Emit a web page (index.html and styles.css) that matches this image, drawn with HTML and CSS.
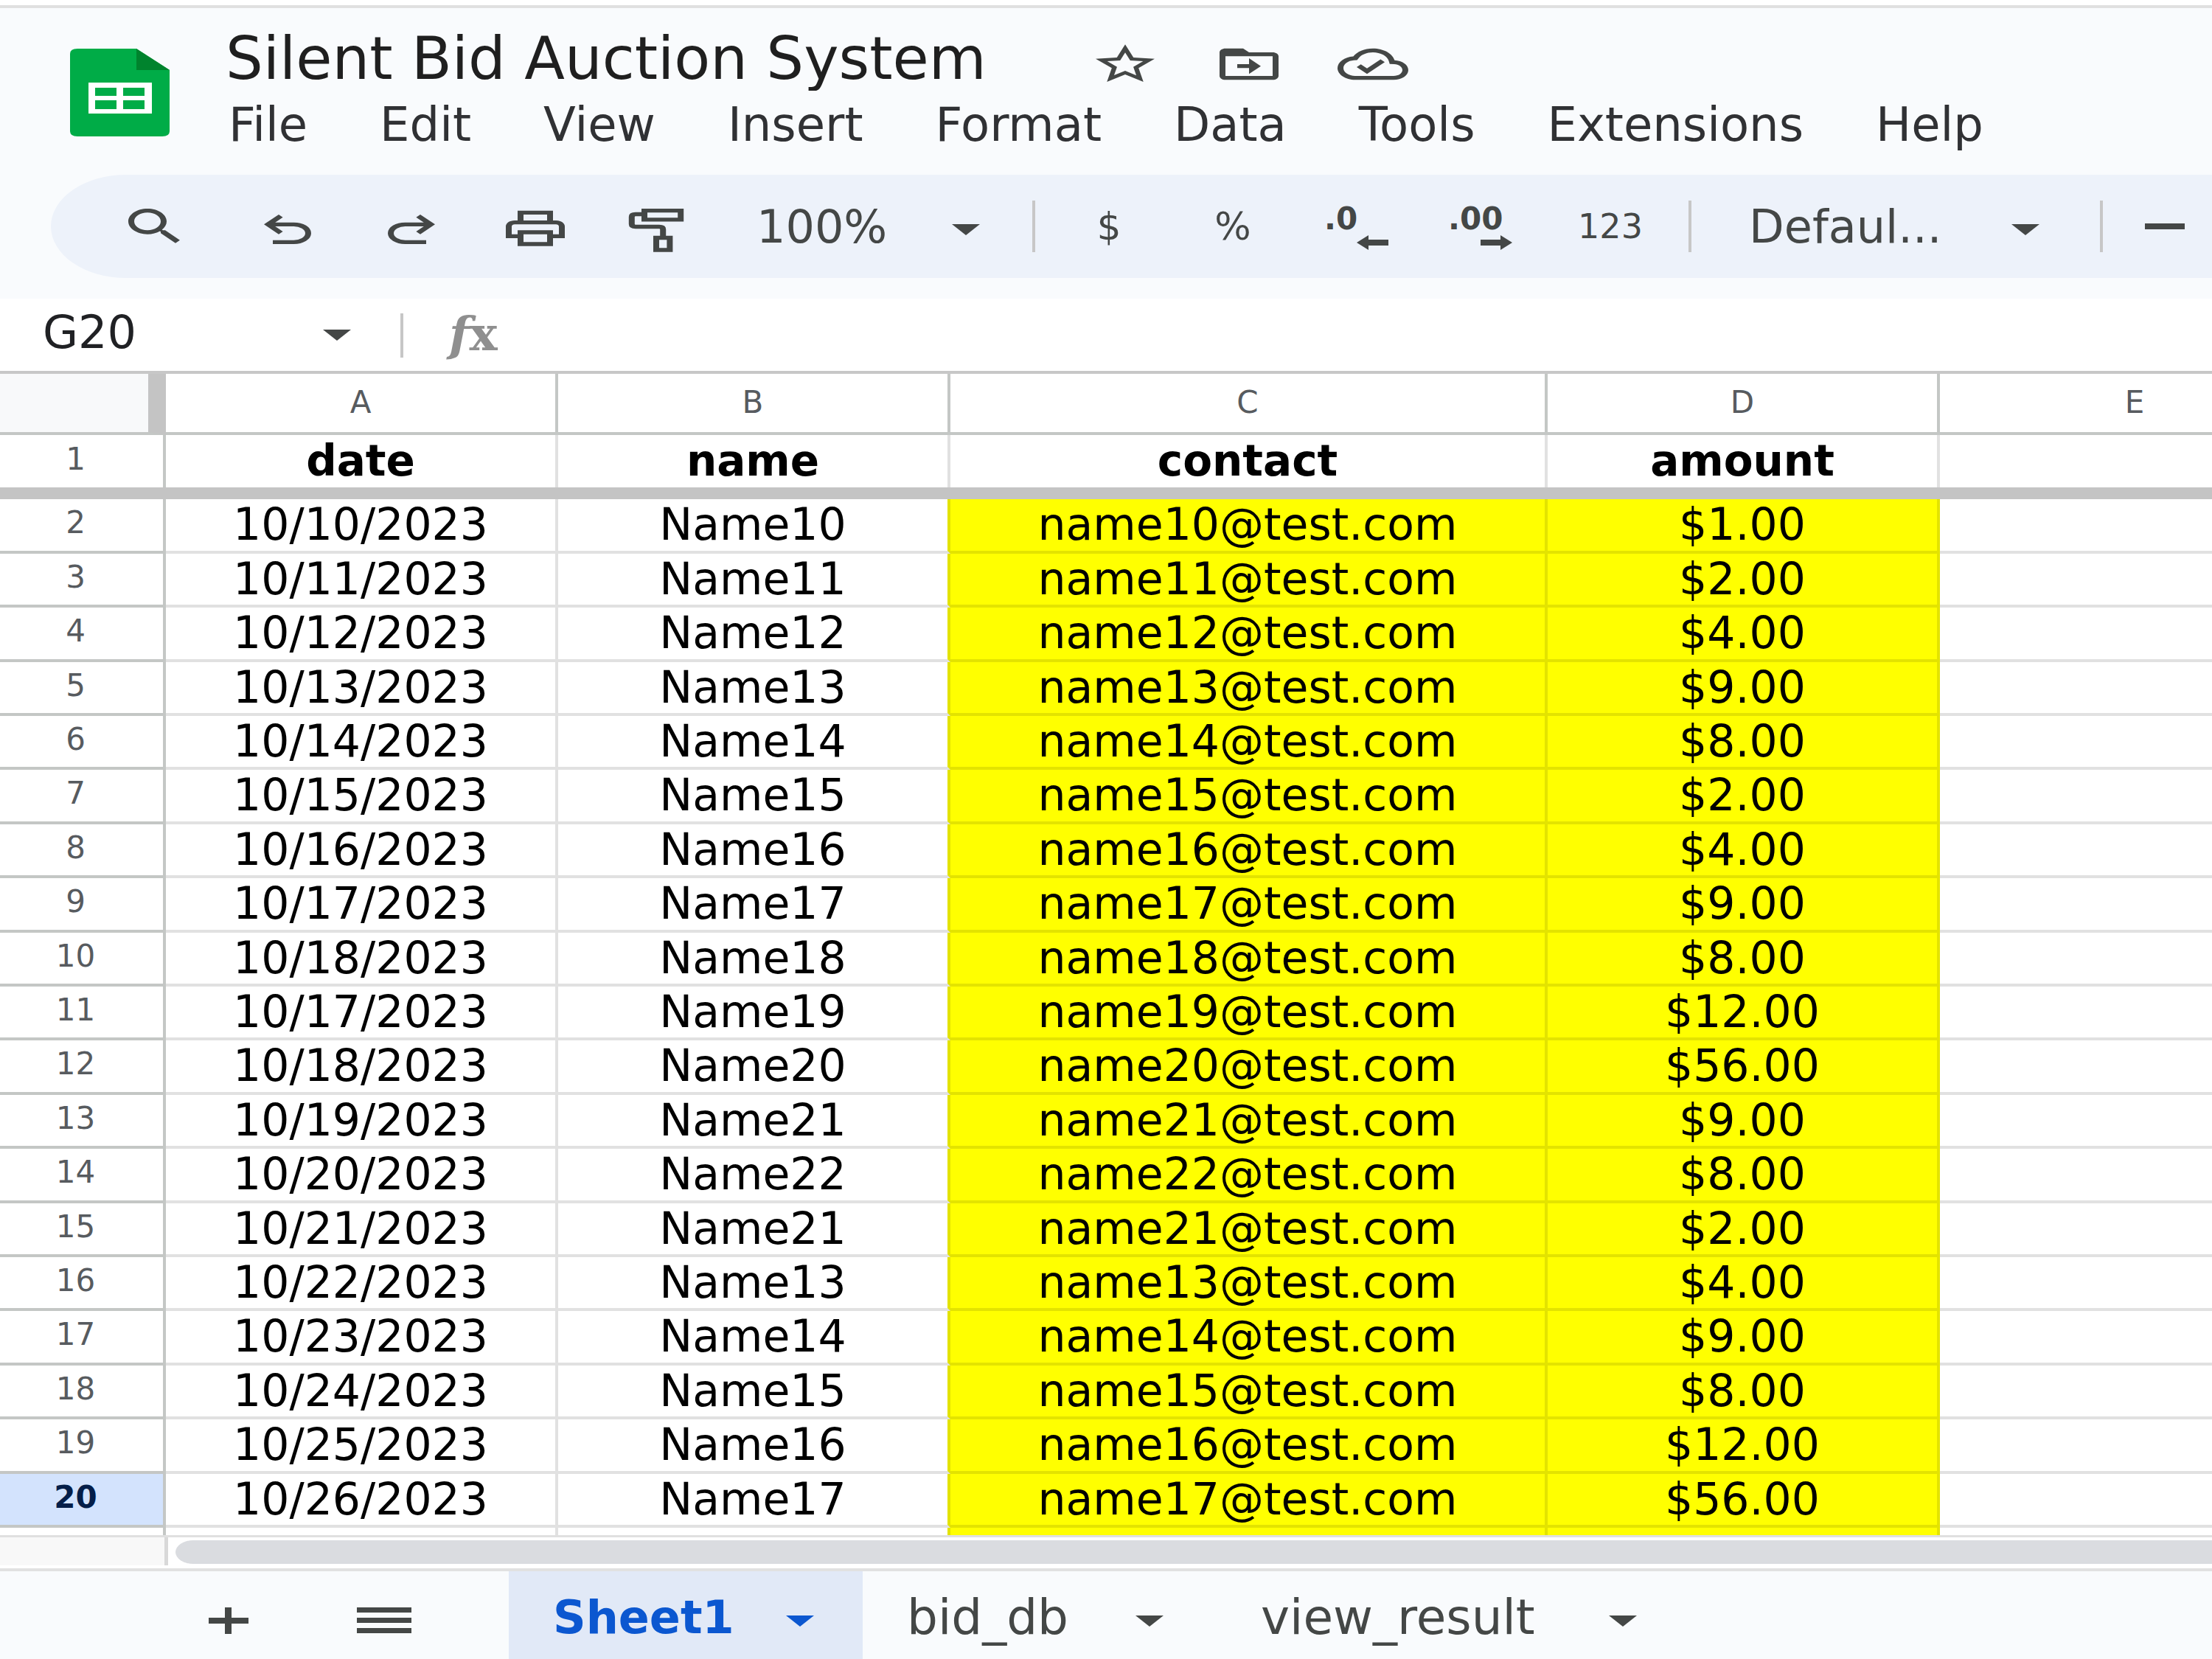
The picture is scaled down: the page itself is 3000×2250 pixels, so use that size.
FILE: index.html
```html
<!DOCTYPE html>
<html lang="en">
<head>
    <meta charset="UTF-8">
    <meta name="viewport" content="width=device-width, initial-scale=1.0">
    <title>Silent Bid Auction System</title>
    <link rel="stylesheet" href="styles.css">
</head>
<body>
    <header>
        <div class="top">
            <svg class="logo" viewBox="0 0 135 119" preserveAspectRatio="none">
                <path fill="#00ac47" d="M10 0h80l45 29v83q0 7-10 7H10q-10 0-10-7V7q0-7 10-7z"/>
                <path fill="#00832d" d="M90 0l45 29H90z"/>
                <path fill="#fff" fill-rule="evenodd" d="M25 46h86v42H25zM34 53v11h29V53zM72 53v11h29V53zM34 70v12h29V70zM72 70v12h29V70z"/>
            </svg>
            <div class="heading">
                <div class="title-row">
                    <input class="doc-title" type="text" value="Silent Bid Auction System" aria-label="Document title">
                    <button aria-label="Star">
                        <svg class="icon" viewBox="0 0 24 24" preserveAspectRatio="none"><path d="M22 9.24l-7.19-.62L12 2 9.19 8.63 2 9.24l5.46 4.73L5.82 21 12 17.27 18.18 21l-1.63-7.03L22 9.24zM12 15.4l-3.76 2.27 1-4.28-3.32-2.88 4.38-.38L12 6.1l1.71 4.04 4.38.38-3.32 2.88 1 4.28L12 15.4z"/></svg>
                    </button>
                    <button aria-label="Move">
                        <svg class="icon" viewBox="0 0 24 24" preserveAspectRatio="none"><path d="M20 6h-8l-2-2H4c-1.1 0-2 .9-2 2v12c0 1.1.9 2 2 2h16c1.1 0 2-.9 2-2V8c0-1.1-.9-2-2-2zm0 12H4V8h16v10zM12 17l4-4-4-4v3H8v2h4z"/></svg>
                    </button>
                    <button aria-label="Saved to Drive">
                        <svg class="icon" viewBox="0 0 24 24" preserveAspectRatio="none"><path d="M19.35 10.04C18.67 6.59 15.64 4 12 4 9.11 4 6.6 5.64 5.35 8.04 2.34 8.36 0 10.91 0 14c0 3.31 2.69 6 6 6h13c2.76 0 5-2.24 5-5 0-2.64-2.05-4.78-4.65-4.96zM19 18H6c-2.21 0-4-1.79-4-4 0-2.05 1.53-3.76 3.56-3.97l1.07-.11.5-.95C8.08 7.14 9.94 6 12 6c2.62 0 4.88 1.86 5.39 4.43l.3 1.5 1.53.11c1.56.1 2.78 1.41 2.78 2.96 0 1.65-1.35 3-3 3zm-9-3.82l-2.09-2.09L6.5 13.5 10 17l6.01-6.01-1.41-1.41z"/></svg>
                    </button>
                </div>
                <nav class="menu">
                    <button>File</button>
                    <button>Edit</button>
                    <button>View</button>
                    <button>Insert</button>
                    <button>Format</button>
                    <button>Data</button>
                    <button>Tools</button>
                    <button>Extensions</button>
                    <button>Help</button>
                </nav>
            </div>
        </div>

        <div class="toolbar">
            <button class="tool search" aria-label="Search the menus">
                <svg class="icon" viewBox="0 0 24 24" preserveAspectRatio="none"><path d="M15.5 14h-.79l-.28-.27C15.41 12.59 16 11.11 16 9.5 16 5.91 13.09 3 9.5 3S3 5.91 3 9.5 5.91 16 9.5 16c1.61 0 3.09-.59 4.23-1.57l.27.28v.79l5 4.99L20.49 19l-4.99-5zm-6 0C7.01 14 5 11.99 5 9.5S7.01 5 9.5 5 14 7.01 14 9.5 11.99 14 9.5 14z"/></svg>
            </button>
            <button class="tool" aria-label="Undo">
                <svg class="icon" viewBox="0 -2 24 24" preserveAspectRatio="none"><path d="M7 19v-2h7.1q1.575 0 2.737-1T18 13.5 16.837 11 14.1 10H7.8l2.6 2.6L9 14 4 9l5-5 1.4 1.4L7.8 8h6.3q2.425 0 4.163 1.575T20 13.5t-1.737 3.925T14.1 19z"/></svg>
            </button>
            <button class="tool" aria-label="Redo">
                <svg class="icon" viewBox="0 -2 24 24" preserveAspectRatio="none"><path transform="matrix(-1 0 0 1 24 0)" d="M7 19v-2h7.1q1.575 0 2.737-1T18 13.5 16.837 11 14.1 10H7.8l2.6 2.6L9 14 4 9l5-5 1.4 1.4L7.8 8h6.3q2.425 0 4.163 1.575T20 13.5t-1.737 3.925T14.1 19z"/></svg>
            </button>
            <button class="tool" aria-label="Print">
                <svg class="icon" viewBox="0 -1 24 24" preserveAspectRatio="none"><path d="M19 8h-1V3H6v5H5c-1.66 0-3 1.34-3 3v6h4v4h12v-4h4v-6c0-1.66-1.34-3-3-3zM8 5h8v3H8V5zm8 12v2H8v-4h8v2zm2-2v-2H6v2H4v-4c0-.55.45-1 1-1h14c.55 0 1 .45 1 1v4h-2z"/></svg>
            </button>
            <button class="tool roller" aria-label="Paint format">
                <svg class="icon line" viewBox="0 0 24 24" preserveAspectRatio="none"><path d="M8 4h12.3v4.6H8zM8 5.8H5q-1.3 0-1.3 1.3v3.8q0 1.3 1.3 1.3h8q1.3 0 1.3 1.3v4M12 17.8h4.6V24H12z"/></svg>
            </button>
            <div class="picker zoom">
                <select aria-label="Zoom"><option>100%</option></select>
                <svg class="arrow" viewBox="0 0 38 24"><path d="M0 9h38L19 24z"/></svg>
            </div>
            <span class="divider"></span>
            <button class="tool currency">$</button>
            <button class="tool">%</button>
            <button class="tool" aria-label="Decrease decimal places">
                <span class="decimal">.0
                    <svg viewBox="0 0 44 20"><path d="M0 10L16 0v6h27v8H16v6z"/></svg>
                </span>
            </button>
            <button class="tool" aria-label="Increase decimal places">
                <span class="decimal">.00
                    <svg viewBox="0 0 44 20"><path d="M43 10L27 0v6H0v8h27v6z"/></svg>
                </span>
            </button>
            <button class="tool formats">123</button>
            <span class="divider"></span>
            <div class="picker font">
                <select aria-label="Font"><option>Defaul...</option></select>
                <svg class="arrow" viewBox="0 0 38 24"><path d="M0 9h38L19 24z"/></svg>
            </div>
            <span class="divider"></span>
            <button class="tool minus" aria-label="Decrease font size">
                <svg viewBox="0 0 54 8"><path d="M0 0h54v8H0z"/></svg>
            </button>
        </div>
    </header>

    <div class="formula-bar">
        <input class="name-box" type="text" value="G20" aria-label="Name box">
        <svg class="arrow" viewBox="0 0 38 24"><path d="M0 9h38L19 24z"/></svg>
        <span class="divider"></span>
        <label class="fx" for="formula"><i>f</i>x</label>
        <input class="formula" id="formula" type="text">
    </div>

    <main class="grid">
        <table>
            <colgroup>
                <col class="col-num"><col class="col"><col class="col"><col class="col-wide"><col class="col"><col class="col">
            </colgroup>
            <thead>
                <tr><th class="corner"></th><th>A</th><th>B</th><th>C</th><th>D</th><th>E</th></tr>
                <tr class="frozen"><th>1</th><td>date</td><td>name</td><td>contact</td><td>amount</td><td></td></tr>
                <tr class="freeze-bar"><td colspan="6"></td></tr>
            </thead>
            <tbody>
                <tr><th>2</th><td>10/10/2023</td><td>Name10</td><td>name10@test.com</td><td>$1.00</td><td></td></tr>
                <tr><th>3</th><td>10/11/2023</td><td>Name11</td><td>name11@test.com</td><td>$2.00</td><td></td></tr>
                <tr><th>4</th><td>10/12/2023</td><td>Name12</td><td>name12@test.com</td><td>$4.00</td><td></td></tr>
                <tr><th>5</th><td>10/13/2023</td><td>Name13</td><td>name13@test.com</td><td>$9.00</td><td></td></tr>
                <tr><th>6</th><td>10/14/2023</td><td>Name14</td><td>name14@test.com</td><td>$8.00</td><td></td></tr>
                <tr><th>7</th><td>10/15/2023</td><td>Name15</td><td>name15@test.com</td><td>$2.00</td><td></td></tr>
                <tr><th>8</th><td>10/16/2023</td><td>Name16</td><td>name16@test.com</td><td>$4.00</td><td></td></tr>
                <tr><th>9</th><td>10/17/2023</td><td>Name17</td><td>name17@test.com</td><td>$9.00</td><td></td></tr>
                <tr><th>10</th><td>10/18/2023</td><td>Name18</td><td>name18@test.com</td><td>$8.00</td><td></td></tr>
                <tr><th>11</th><td>10/17/2023</td><td>Name19</td><td>name19@test.com</td><td>$12.00</td><td></td></tr>
                <tr><th>12</th><td>10/18/2023</td><td>Name20</td><td>name20@test.com</td><td>$56.00</td><td></td></tr>
                <tr><th>13</th><td>10/19/2023</td><td>Name21</td><td>name21@test.com</td><td>$9.00</td><td></td></tr>
                <tr><th>14</th><td>10/20/2023</td><td>Name22</td><td>name22@test.com</td><td>$8.00</td><td></td></tr>
                <tr><th>15</th><td>10/21/2023</td><td>Name21</td><td>name21@test.com</td><td>$2.00</td><td></td></tr>
                <tr><th>16</th><td>10/22/2023</td><td>Name13</td><td>name13@test.com</td><td>$4.00</td><td></td></tr>
                <tr><th>17</th><td>10/23/2023</td><td>Name14</td><td>name14@test.com</td><td>$9.00</td><td></td></tr>
                <tr><th>18</th><td>10/24/2023</td><td>Name15</td><td>name15@test.com</td><td>$8.00</td><td></td></tr>
                <tr><th>19</th><td>10/25/2023</td><td>Name16</td><td>name16@test.com</td><td>$12.00</td><td></td></tr>
                <tr class="active"><th>20</th><td>10/26/2023</td><td>Name17</td><td>name17@test.com</td><td>$56.00</td><td></td></tr>
                <tr><th></th><td></td><td></td><td></td><td></td><td></td></tr>
            </tbody>
        </table>
    </main>

    <div class="scroll-row">
        <div class="scroll-stub"></div>
        <div class="scroll-thumb"></div>
    </div>

    <footer>
        <button class="add" aria-label="Add sheet">
            <svg viewBox="0 0 54 36"><path d="M22 0h9v14h23v8H31v14h-9V22H0v-8h22z"/></svg>
        </button>
        <button class="all" aria-label="All sheets">
            <svg viewBox="0 0 74 36"><path d="M0 0h74v7H0zM0 14h74v7H0zM0 28h74v7H0z"/></svg>
        </button>
        <button class="tab selected">Sheet1 <svg class="arrow" viewBox="0 0 38 24"><path d="M0 9h38L19 24z"/></svg></button>
        <button class="tab">bid_db <svg class="arrow" viewBox="0 0 38 24"><path d="M0 9h38L19 24z"/></svg></button>
        <button class="tab long">view_result <svg class="arrow" viewBox="0 0 38 24"><path d="M0 9h38L19 24z"/></svg></button>
    </footer>
</body>
</html>
```
FILE: styles.css
```css
* {
    box-sizing: border-box;
}
body {
    margin: 0;
    height: 100vh;
    display: flex;
    flex-direction: column;
    overflow: hidden;
    background: #fff;
    font-family: "DejaVu Sans", Verdana, sans-serif;
    color: #444746;
}
button, input, select {
    font: inherit;
    color: inherit;
    background: none;
    border: none;
    padding: 0;
    margin: 0;
    outline: none;
}
button {
    cursor: pointer;
}
svg {
    display: block;
    flex: none;
    fill: #444746;
}
.icon {
    width: 96px;
    height: 64px;
    overflow: visible;
}
.icon.line {
    fill: none;
    stroke: #444746;
    stroke-width: 2;
}
.arrow {
    width: 38px;
    height: 24px;
}
.divider {
    flex: none;
    width: 4px;
    background: #c7c7c7;
}

/* title and menus */
header {
    flex: none;
    margin-top: 7px;
    padding-bottom: 28px;
    border-top: 4px solid #e0e0e0;
    background: #f9fbfd;
}
.top {
    display: flex;
    padding: 24px 0 0 95px;
}
.logo {
    width: 135px;
    height: 119px;
    margin: 31px 76px 0 0;
}
.title-row {
    display: flex;
    align-items: flex-end;
    gap: 72px;
    height: 88px;
}
.title-row button {
    margin-bottom: 4px;
}
.doc-title {
    width: 1100px;
    height: 88px;
    font-size: 80px;
    color: #1f1f1f;
}
.menu {
    display: flex;
    gap: 98px;
    margin: 8px 0 0 4px;
    font-size: 64px;
    line-height: 76px;
    color: #303134;
}

/* toolbar */
.toolbar {
    display: flex;
    align-items: center;
    height: 140px;
    margin: 30px 0 0 69px;
    padding-left: 57px;
    overflow: hidden;
    background: #edf2fa;
    border-radius: 102px 0 0 102px / 70px 0 0 70px;
    font-size: 62px;
}
.tool {
    flex: none;
    display: flex;
    align-items: center;
    justify-content: center;
    width: 168px;
    height: 100px;
    font-size: 52px;
}
.search {
    margin-right: 12px;
}
.roller {
    margin-left: -4px;
}
.currency {
    margin-left: 16px;
}
.formats {
    margin: 0 22px 0 8px;
    font-size: 46px;
}
.toolbar .divider {
    height: 70px;
}
.picker {
    flex: none;
    display: flex;
    align-items: center;
}
.picker select {
    flex: 1;
    appearance: none;
}
.zoom {
    width: 426px;
    padding: 0 71px 0 52px;
}
.font {
    width: 554px;
    padding: 0 82px 0 78px;
}
.decimal {
    width: 88px;
    padding-top: 4px;
    font-size: 42px;
    font-weight: bold;
    line-height: 36px;
    text-align: left;
}
.decimal svg {
    width: 44px;
    height: 20px;
    margin: 4px 0 0 auto;
}
.minus svg {
    width: 54px;
}

/* name box and formula */
.formula-bar {
    flex: none;
    display: flex;
    align-items: center;
    height: 102px;
    padding: 0 0 8px 58px;
    border-bottom: 4px solid #c7c7c7;
}
.name-box {
    width: 380px;
    font-size: 62px;
    color: #202124;
}
.formula-bar .divider {
    height: 60px;
    margin: 10px 62px 0 67px;
}
.fx {
    padding-top: 6px;
    font: bold 64px/60px "DejaVu Serif", serif;
    color: #8f8f8f;
}
.formula {
    flex: 1;
    font-size: 62px;
}

/* cells */
.grid {
    flex: 1;
    min-height: 0;
    overflow: hidden;
}
table {
    table-layout: fixed;
    width: 3161px;
    border-collapse: separate;
    border-spacing: 0;
}
.col-num {
    width: 225px;
}
.col {
    width: 532px;
}
.col-wide {
    width: 810px;
}
th, td {
    padding: 0;
    vertical-align: top;
    text-align: center;
    border: solid #e1e1e1;
    border-width: 0 4px 4px 0;
}
th {
    border-color: #c4c7c5;
    font-size: 42px;
    font-weight: normal;
    line-height: 64px;
    color: #575b5f;
}
td {
    font-size: 60px;
    line-height: 69px;
    color: #000;
}
thead th {
    height: 83px;
    line-height: 78px;
}
.corner {
    border-right: 24px solid #c4c4c4;
    background: #f8f9fa;
}
tbody th, .frozen th {
    padding-right: 16px;
}
tbody tr {
    height: 73px;
}
tbody tr:nth-child(5n+1), tbody tr:nth-child(5n+3) {
    height: 74px;
}
.frozen th, .frozen td {
    height: 71px;
    border-bottom: none;
    line-height: 66px;
    font-size: 42px;
}
.frozen td {
    font-size: 58px;
    font-weight: bold;
    line-height: 70px;
}
.freeze-bar td {
    height: 16px;
    border: none;
    background: #c4c4c4;
}
tbody td:nth-child(4), tbody td:nth-child(5) {
    background: #ff0;
    border-color: #e3e300;
}
tbody td:nth-child(3) {
    border-right-color: #e3e300;
}
.active th {
    background: #d3e3fd;
    font-weight: bold;
    color: #041e49;
}

/* horizontal scrollbar */
.scroll-row {
    flex: none;
    display: flex;
    height: 45px;
    border-top: 3px solid #e0e0e0;
}
.scroll-stub {
    width: 228px;
    margin-bottom: 4px;
    border-right: 5px solid #d9d9d9;
    background: #f8f8f8;
}
.scroll-thumb {
    flex: 1;
    height: 32px;
    margin: 4px 0 0 10px;
    background: #dadce0;
    border-radius: 24px 0 0 24px / 16px 0 0 16px;
}

/* sheet tabs */
footer {
    flex: none;
    display: flex;
    align-items: stretch;
    height: 123px;
    border-top: 4px solid #e1e1e1;
    background: #f9fbfd;
}
footer button {
    flex: none;
    display: flex;
    align-items: center;
}
.add {
    padding: 14px 75px 0 283px;
}
.add svg {
    width: 54px;
}
.all {
    padding: 14px 132px 0 72px;
}
.all svg {
    width: 74px;
}
.tab {
    justify-content: space-between;
    width: 480px;
    padding: 6px 72px 0 60px;
    font-size: 66px;
}
.tab.selected {
    padding: 6px 66px 0 60px;
    background: #e1e9f7;
    color: #0b57d0;
    font-size: 62px;
    font-weight: bold;
}
.tab.selected svg {
    fill: #0b57d0;
}
.tab.long {
    width: 634px;
    padding-right: 64px;
}
```
